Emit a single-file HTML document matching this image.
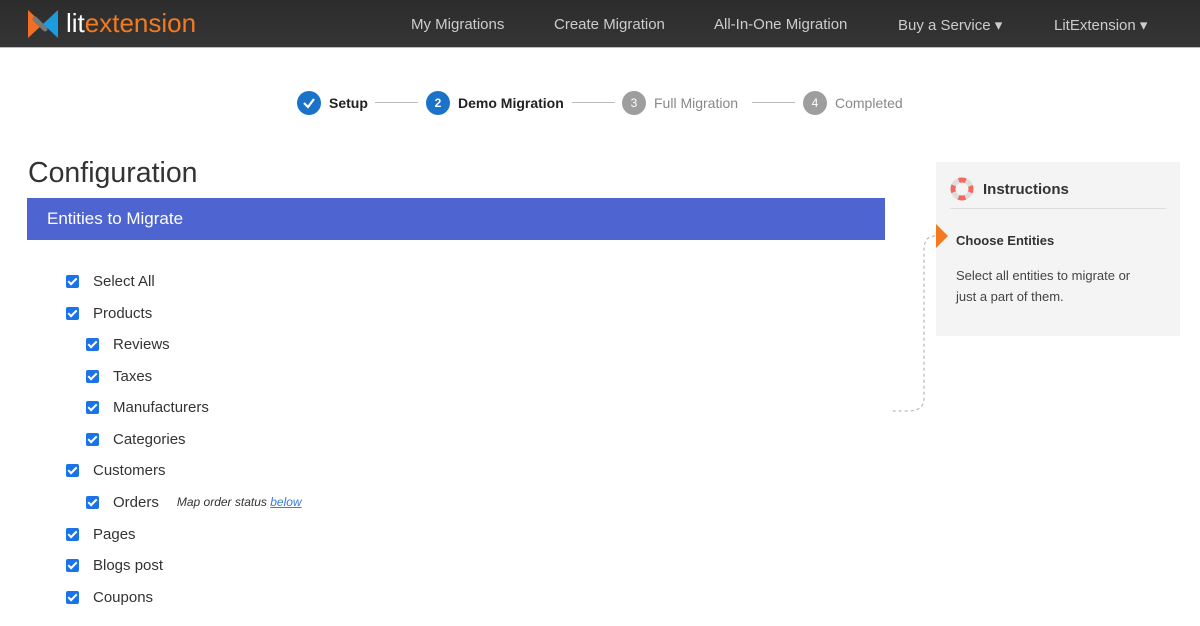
<!DOCTYPE html>
<html><head><meta charset="utf-8"><style>
*{margin:0;padding:0;box-sizing:border-box}
body{width:1200px;height:626px;background:#fff;font-family:"Liberation Sans",sans-serif;position:relative;overflow:hidden}
.hdr{position:absolute;left:0;top:0;width:1200px;height:48px;background:linear-gradient(#2c2c2c,#353535);border-bottom:1px solid #bbb}
.nav{position:absolute;top:16px;color:#ccc;font-size:15px}
.logo{position:absolute;left:66px;top:8px;font-size:26px;font-weight:normal;letter-spacing:0px}
.step{position:absolute;top:91px;height:24px;display:flex;align-items:center;font-size:14px}
.c{width:24px;height:24px;border-radius:50%;color:#fff;font-size:12px;display:flex;align-items:center;justify-content:center;margin-right:8px}
.line{position:absolute;top:102px;height:1px;background:#bbb}
h1{position:absolute;left:28px;top:157px;font-size:28.5px;font-weight:normal;color:#333}
.bar{position:absolute;left:27px;top:198px;width:858px;height:42px;background:#4e65d1;color:#fff;font-size:17px;padding:11px 0 0 20px}
.row{position:absolute;font-size:15px;color:#333;display:flex;align-items:center;height:20px}
.cb{width:13px;height:13px;background:#1a73e8;border-radius:2px;margin-right:14px;position:relative}
.cb::after{content:"";position:absolute;left:4px;top:1px;width:3px;height:7px;border:solid #fff;border-width:0 2px 2px 0;transform:rotate(45deg)}
.panel{position:absolute;left:936px;top:162px;width:244px;height:174px;background:#f4f4f4}
</style></head><body>
<div class="hdr">
<svg style="position:absolute;left:28px;top:10px" width="30" height="28" viewBox="0 0 30 28"><path d="M0 0 L15 14 L0 28Z" fill="#f26e22"/><path d="M30 0 L15 14 L30 28Z" fill="#1d9be0"/><path d="M7 9 L17 19" stroke="#777" stroke-width="5" stroke-linecap="round"/></svg>
<div class="logo"><span style="color:#fff">lit</span><span style="color:#f47a20">extension</span></div>
<div class="nav" style="left:411px">My Migrations</div>
<div class="nav" style="left:554px">Create Migration</div>
<div class="nav" style="left:714px">All-In-One Migration</div>
<div class="nav" style="left:898px">Buy a Service ▾</div>
<div class="nav" style="left:1054px">LitExtension ▾</div>
</div>
<div class="step" style="left:297px;color:#222;font-weight:bold"><div class="c" style="background:#1a73c8"><svg width="14" height="12" viewBox="0 0 14 12"><path d="M2 6 L6 10 L12 2" stroke="#fff" stroke-width="2.2" fill="none"/></svg></div>Setup</div>
<div class="line" style="left:375px;width:43px"></div>
<div class="step" style="left:426px;color:#222;font-weight:bold"><div class="c" style="background:#1a73c8">2</div>Demo Migration</div>
<div class="line" style="left:572px;width:43px"></div>
<div class="step" style="left:622px;color:#888"><div class="c" style="background:#9e9e9e">3</div>Full Migration</div>
<div class="line" style="left:752px;width:43px"></div>
<div class="step" style="left:803px;color:#888"><div class="c" style="background:#9e9e9e">4</div>Completed</div>
<h1>Configuration</h1>
<div class="bar">Entities to Migrate</div>
<div class="row" style="left:66px;top:271px"><div class="cb"></div>Select All</div>
<div class="row" style="left:66px;top:303px"><div class="cb"></div>Products</div>
<div class="row" style="left:86px;top:334px"><div class="cb"></div>Reviews</div>
<div class="row" style="left:86px;top:366px"><div class="cb"></div>Taxes</div>
<div class="row" style="left:86px;top:397px"><div class="cb"></div>Manufacturers</div>
<div class="row" style="left:86px;top:429px"><div class="cb"></div>Categories</div>
<div class="row" style="left:66px;top:460px"><div class="cb"></div>Customers</div>
<div class="row" style="left:86px;top:492px"><div class="cb"></div>Orders<span style="font-size:12px;font-style:italic;margin-left:18px">Map order status <span style="color:#3a7bd5;text-decoration:underline">below</span></span></div>
<div class="row" style="left:66px;top:524px"><div class="cb"></div>Pages</div>
<div class="row" style="left:66px;top:555px"><div class="cb"></div>Blogs post</div>
<div class="row" style="left:66px;top:587px"><div class="cb"></div>Coupons</div>
<div class="panel">
<svg style="position:absolute;left:14px;top:15px" width="24" height="24" viewBox="0 0 24 24"><circle cx="12" cy="12" r="9" fill="none" stroke="#ddd" stroke-width="5"/><circle cx="12" cy="12" r="9" fill="none" stroke="#f46b5d" stroke-width="5" stroke-dasharray="7 7.14" stroke-dashoffset="3.5"/></svg>
<div style="position:absolute;left:47px;top:19px;font-size:15px;font-weight:bold;color:#333">Instructions</div>
<div style="position:absolute;left:14px;top:46px;width:216px;height:1px;background:#ddd"></div>
<div style="position:absolute;left:0;top:62px;width:0;height:0;border-top:12px solid transparent;border-bottom:12px solid transparent;border-left:12px solid #f47a20"></div>
<div style="position:absolute;left:20px;top:71px;font-size:13px;font-weight:bold;color:#333">Choose Entities</div>
<div style="position:absolute;left:20px;top:103px;font-size:13px;color:#444;line-height:21px;width:190px">Select all entities to migrate or just a part of them.</div>
</div>
<svg style="position:absolute;left:890px;top:230px" width="50" height="185"><path d="M45 6 Q34 6 34 20 L34 168 Q34 181 18 181 L0 181" fill="none" stroke="#aaa" stroke-dasharray="3 3"/></svg>
</body></html>
